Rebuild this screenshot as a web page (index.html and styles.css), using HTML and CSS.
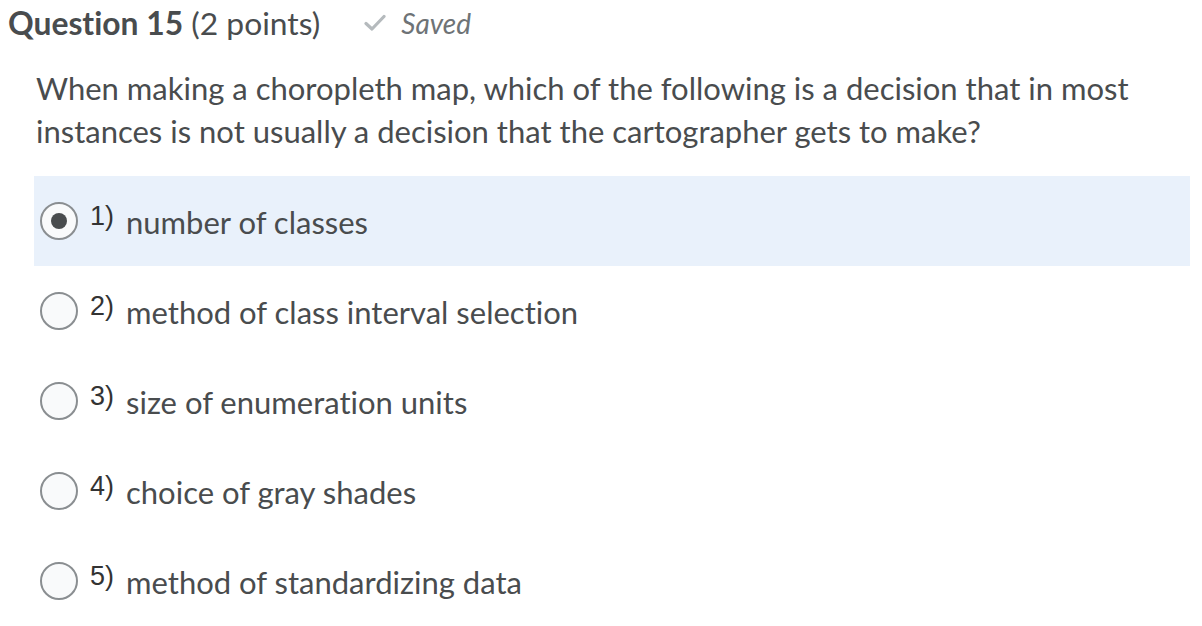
FILE: index.html
```html
<!DOCTYPE html>
<html>
<head>
<meta charset="utf-8">
<link rel="stylesheet" href="styles.css">
</head>
<body>
<div class="page">
  <div class="header">
    <h2 class="title"><strong>Question 15</strong> (2 points)</h2>
    <span class="saved">
      <svg class="check" width="22" height="18" viewBox="0 0 22 18"><path d="M2 9.5 L8 15 L20 2.5" fill="none" stroke="#b5babd" stroke-width="3.2" stroke-linecap="round" stroke-linejoin="round"/></svg>
      <em>Saved</em>
    </span>
  </div>
  <p class="question">When making a choropleth map, which of the following is a decision that in most instances is not usually a decision that the cartographer gets to make?</p>
  <div class="options">
    <label class="option selected"><span class="radio checked"></span><span class="num">1)</span><span class="text">number of classes</span></label>
    <label class="option"><span class="radio"></span><span class="num">2)</span><span class="text">method of class interval selection</span></label>
    <label class="option"><span class="radio"></span><span class="num">3)</span><span class="text">size of enumeration units</span></label>
    <label class="option"><span class="radio"></span><span class="num">4)</span><span class="text">choice of gray shades</span></label>
    <label class="option"><span class="radio"></span><span class="num">5)</span><span class="text">method of standardizing data</span></label>
  </div>
</div>
</body>
</html>
```
FILE: styles.css
```css
html, body { margin: 0; padding: 0; background: #fff; }
body { font-family: Lato, "Open Sans", sans-serif; color: #494c4e; font-variant-ligatures: none; }
.page { padding: 0 12px 0 8px; }
.header { display: flex; align-items: center; height: 46px; }
.title { margin: 0; font-size: 31.8px; font-weight: 400; }
.title strong { font-weight: 700; }
.saved { display: flex; align-items: center; margin-left: 44px; color: #6e7376; font-size: 28px; }
.saved .check { margin-right: 15px; }
.saved em { font-style: italic; }
.question { margin: 21px 0 0 28px; font-size: 31px; line-height: 43px; max-width: 1130px; }
.options { margin-top: 23px; margin-left: 26px; }
.option { display: flex; align-items: center; height: 90px; padding-left: 6px; }
.option.selected { background: #e9f1fb; }
.radio { box-sizing: border-box; width: 38px; height: 38px; border: 2px solid #8a8e91; border-radius: 50%; background: #f9fafb; display: flex; align-items: center; justify-content: center; flex: none; }
.radio.checked::after { content: ""; width: 16px; height: 16px; border-radius: 50%; background: #494c4e; }
.num { font-family: "Liberation Sans", Arial, sans-serif; font-size: 27px; margin-left: 12px; margin-right: 12px; position: relative; top: -5px; color: #333; }
.text { font-size: 31px; position: relative; top: 1px; }
```
